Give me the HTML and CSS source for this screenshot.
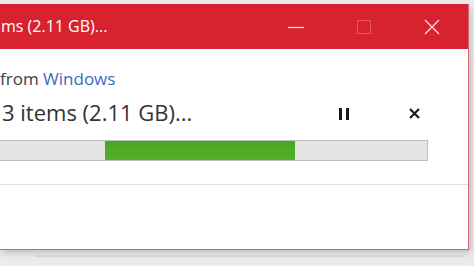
FILE: index.html
```html
<!DOCTYPE html>
<html>
<head>
<meta charset="utf-8">
<link rel="stylesheet" href="styles.css">
</head>
<body>
<div class="window">
  <div class="titlebar">
    <span class="title">ms (2.11 GB)...</span>
    <div class="controls">
      <span class="ctl"><svg width="16" height="16" viewBox="0 0 16 16"><line x1="0" y1="8.5" x2="16" y2="8.5" stroke="#f6d9db" stroke-width="1.3"/></svg></span>
      <span class="ctl"><svg width="16" height="16" viewBox="0 0 16 16"><rect x="1.5" y="1.5" width="13" height="13" fill="none" stroke="#e4545e" stroke-width="1"/></svg></span>
      <span class="ctl"><svg width="16" height="16" viewBox="0 0 16 16"><path d="M1 1L15 15M15 1L1 15" stroke="#fbe3e5" stroke-width="1.3"/></svg></span>
    </div>
  </div>
  <div class="content">
    <div class="from">from <span class="link">Windows</span></div>
    <div class="status">
      <span class="big">3 items (2.11 GB)...</span>
      <div class="actions">
        <svg class="pause" width="11" height="12" viewBox="0 0 11 12"><rect x="0" y="0" width="3" height="12" fill="#1a1a1a"/><rect x="7" y="0" width="3" height="12" fill="#1a1a1a"/></svg>
        <svg class="stop" width="11" height="11" viewBox="0 0 11 11"><path d="M1 1L10 10M10 1L1 10" stroke="#1a1a1a" stroke-width="2.2"/></svg>
      </div>
    </div>
    <div class="bar"><div class="fill"></div></div>
  </div>
  <div class="sep"></div>
</div>
<div class="behind"></div>
</body>
</html>
```
FILE: styles.css
```css
html, body {
  margin: 0;
  padding: 0;
}
body {
  width: 474px;
  height: 266px;
  overflow: hidden;
  background: #ebebeb;
  font-family: "Open Sans", "Noto Sans", sans-serif;
  padding-top: 4px;
  box-sizing: border-box;
}
.window {
  width: 469px;
  height: 246px;
  box-sizing: border-box;
  background: #ffffff;
  border-right: 1px solid #d46471;
  border-bottom: 1px solid #d46471;
  box-shadow: 2px 3px 6px rgba(0,0,0,0.18);
  display: flex;
  flex-direction: column;
}
.titlebar {
  height: 45px;
  flex: none;
  background: #d8222f;
  display: flex;
  align-items: center;
  justify-content: space-between;
  color: #ffffff;
}
.title {
  font-size: 16px;
  padding-left: 1px;
  padding-bottom: 1px;
}
.controls {
  display: flex;
  gap: 52px;
  padding-right: 28px;
}
.ctl {
  display: flex;
  width: 16px;
  height: 16px;
}
.content {
  padding: 19px 40px 0 0;
  display: flex;
  flex-direction: column;
}
.from {
  font-size: 17px;
  color: #3d3d3d;
  line-height: 22px;
}
.link {
  color: #3b6cc1;
}
.status {
  display: flex;
  align-items: center;
  justify-content: space-between;
  margin-top: 5px;
  height: 34px;
}
.big {
  font-size: 22px;
  color: #333333;
  padding-left: 2px;
  padding-bottom: 1px;
}
.actions {
  display: flex;
  gap: 59px;
  padding-right: 8px;
  padding-top: 4px;
}
.bar {
  margin-top: 11px;
  height: 21px;
  box-sizing: border-box;
  border: 1px solid #bdbdbd;
  border-left: none;
  background: #e5e5e5;
  display: flex;
}
.fill {
  margin-left: 105px;
  width: 190px;
  background: linear-gradient(#4aa622, #55b12a);
}
.sep {
  margin-top: 23px;
  height: 1px;
  background: #dedede;
}
.behind {
  margin: 5px 10px 0 35px;
  height: 2px;
  background: #d4d4d4;
}
```
